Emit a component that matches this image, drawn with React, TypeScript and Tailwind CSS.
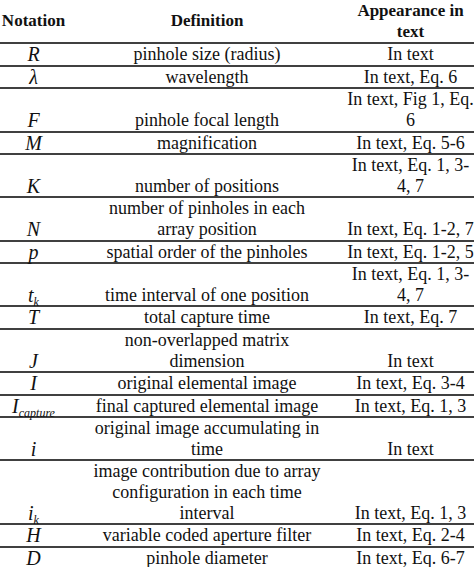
import React from "react";

type Row = {
  sym: React.ReactNode;
  def: string[];
  app: string[];
};

const Sym = ({ base, sub }: { base: string; sub?: string }) => (
  <span className="italic">
    {base}
    {sub ? (
      <span className="italic text-[12px] leading-none relative top-[4px]">{sub}</span>
    ) : null}
  </span>
);

const rows: Row[] = [
  { sym: <Sym base="R" />, def: ["pinhole size (radius)"], app: ["In text"] },
  { sym: <Sym base="λ" />, def: ["wavelength"], app: ["In text, Eq. 6"] },
  { sym: <Sym base="F" />, def: ["pinhole focal length"], app: ["In text, Fig 1, Eq.", "6"] },
  { sym: <Sym base="M" />, def: ["magnification"], app: ["In text, Eq. 5-6"] },
  { sym: <Sym base="K" />, def: ["number of positions"], app: ["In text, Eq. 1, 3-", "4, 7"] },
  { sym: <Sym base="N" />, def: ["number of pinholes in each", "array position"], app: ["In text, Eq. 1-2, 7"] },
  { sym: <Sym base="p" />, def: ["spatial order of the pinholes"], app: ["In text, Eq. 1-2, 5"] },
  { sym: <Sym base="t" sub="k" />, def: ["time interval of one position"], app: ["In text, Eq. 1, 3-", "4, 7"] },
  { sym: <Sym base="T" />, def: ["total capture time"], app: ["In text, Eq. 7"] },
  { sym: <Sym base="J" />, def: ["non-overlapped matrix", "dimension"], app: ["In text"] },
  { sym: <Sym base="I" />, def: ["original elemental image"], app: ["In text, Eq. 3-4"] },
  { sym: <Sym base="I" sub="capture" />, def: ["final captured elemental image"], app: ["In text, Eq. 1, 3"] },
  { sym: <Sym base="i" />, def: ["original image accumulating in", "time"], app: ["In text"] },
  {
    sym: <Sym base="i" sub="k" />,
    def: ["image contribution due to array", "configuration in each time", "interval"],
    app: ["In text, Eq. 1, 3"],
  },
  { sym: <Sym base="H" />, def: ["variable coded aperture filter"], app: ["In text, Eq. 2-4"] },
  { sym: <Sym base="D" />, def: ["pinhole diameter"], app: ["In text, Eq. 6-7"] },
];

const Lines = ({ lines }: { lines: string[] }) => (
  <>
    {lines.map((l, i) => (
      <div key={i} className="whitespace-nowrap">
        {l}
      </div>
    ))}
  </>
);

export default function App() {
  return (
    <div className="w-[474px] h-[567px] overflow-hidden bg-white pt-[1px] font-['Liberation_Serif'] text-[#111111] leading-[20.6px]">
      <div className="flex items-center border-b-2 border-[#404040] text-[17px] font-bold">
        <div className="w-[67px] shrink-0 text-center whitespace-nowrap">Notation</div>
        <div className="w-[280px] shrink-0 text-center">Definition</div>
        <div className="w-[127px] shrink-0 text-center">
          <div className="whitespace-nowrap">Appearance in</div>
          <div>text</div>
        </div>
      </div>
      {rows.map((r, i) => (
        <div key={i} className="flex items-end border-b-2 border-[#404040] text-[18px]">
          <div className="w-[67px] shrink-0 text-center whitespace-nowrap text-[20px]">{r.sym}</div>
          <div className="w-[280px] shrink-0 text-center">
            <Lines lines={r.def} />
          </div>
          <div className="w-[127px] shrink-0 flex flex-col items-center">
            <Lines lines={r.app} />
          </div>
        </div>
      ))}
    </div>
  );
}
